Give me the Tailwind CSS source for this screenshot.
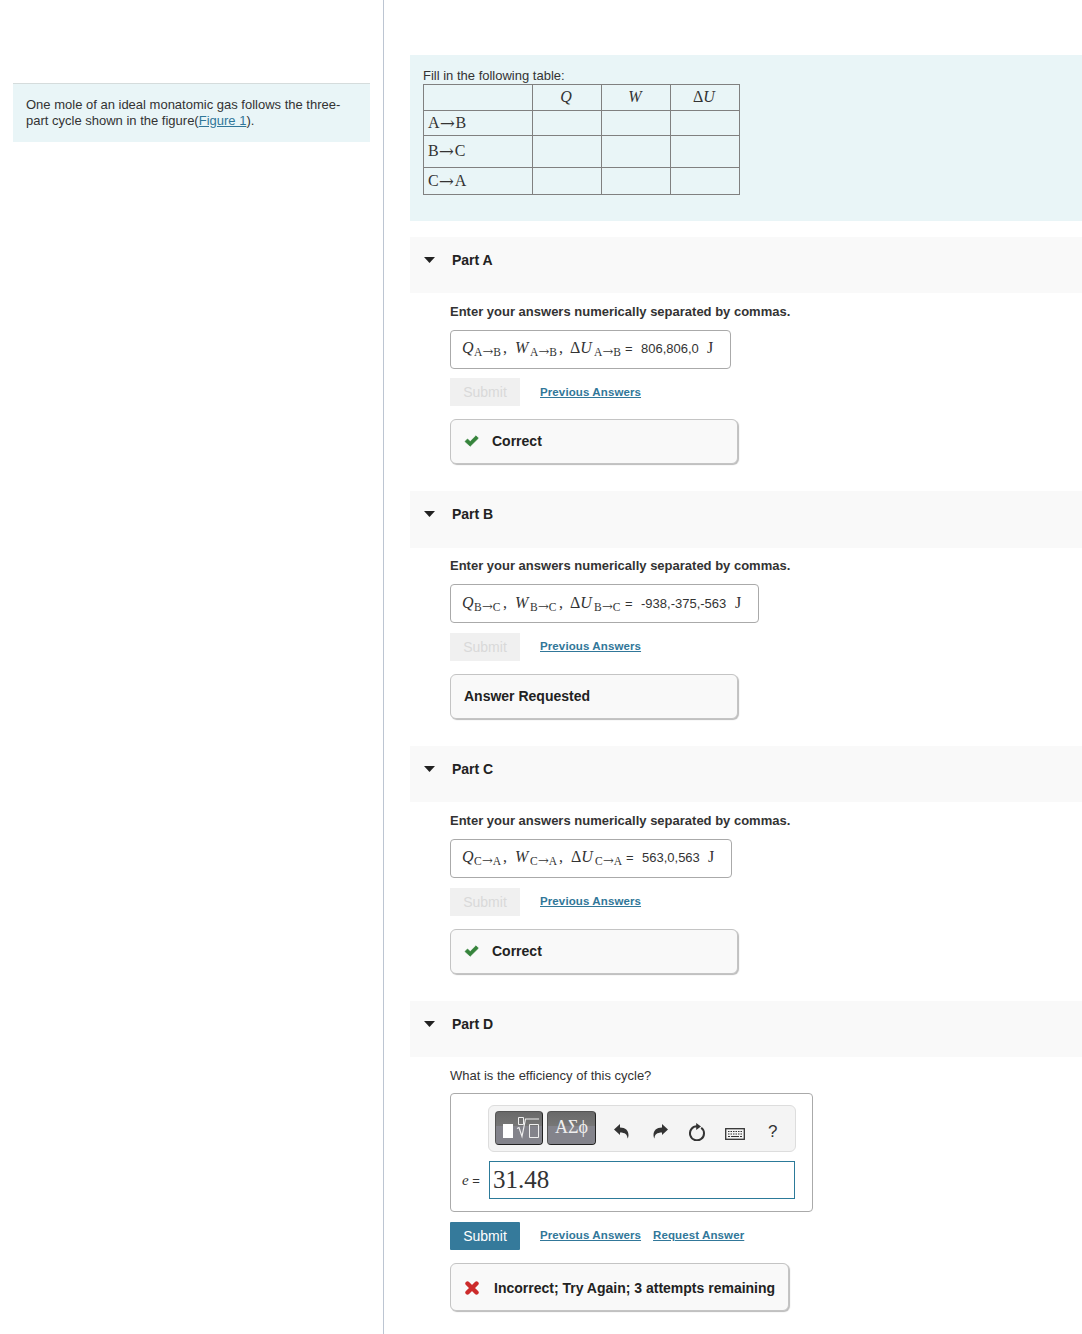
<!DOCTYPE html>
<html lang="en">
<head>
<meta charset="UTF-8" />
<meta name="viewport" content="width=device-width, initial-scale=1.0" />
<title>Ideal Gas Cycle</title>
<script src="https://cdn.jsdelivr.net/npm/@tailwindcss/browser@4"></script>
</head>

<body class="bg-white flex h-[1334px] overflow-hidden font-['Liberation_Sans',Arial,sans-serif] text-[13px] leading-4 text-[#333]">
<aside class="w-[384px] shrink-0 border-r border-[#bcc5d2] pt-[83px] pl-[13px] pr-[13px]">
  <div class="h-[59px] bg-[#e9f5f7] border-t border-[#d5dcdc] pt-[13px] pl-[13px] whitespace-nowrap">
    <p>One mole of an ideal monatomic gas follows the three-</p>
    <p>part cycle shown in the figure(<a href="#" class="text-[#317799] underline">Figure 1</a>).</p>
  </div>
</aside>

<main class="flex-1 pt-[55px] pl-[26px] whitespace-nowrap">
  <!-- Problem table -->
  <div class="h-[166px] bg-[#e9f5f7] pt-[13px] pl-[13px]">
    <p>Fill in the following table:</p>
    <table class="w-[317px] table-fixed border-collapse font-['Liberation_Serif',serif] text-base leading-4 [&_td]:border [&_td]:border-[#808080] [&_td]:p-0 [&_b]:inline-block [&_b]:w-4 [&_b]:h-4 [&_b]:align-top [&_b]:text-center [&_b]:font-normal [&_b]:font-['DejaVu_Math_TeX_Gyre','Liberation_Serif']">
      <tr class="h-[26px] text-center">
        <td class="w-[109px]"></td>
        <td class="w-[69px] italic"><span class="relative -left-px -top-px">Q</span></td>
        <td class="w-[69px] italic"><span class="relative -left-px -top-px">W</span></td>
        <td class="w-[69px]"><span class="relative -left-px -top-px">Δ<i>U</i></span></td>
      </tr>
      <tr class="h-[25px]"><td><span class="pl-1">A<b>→</b>B</span></td><td></td><td></td><td></td></tr>
      <tr class="h-[32px]"><td><span class="pl-1 relative -top-px">B<b>→</b>C</span></td><td></td><td></td><td></td></tr>
      <tr class="h-[27px]"><td><span class="pl-1">C<b>→</b>A</span></td><td></td><td></td><td></td></tr>
    </table>
  </div>

  <!-- Part A -->
  <section class="mt-4 h-[254px]">
    <header class="h-14 bg-[#f9f9f9] flex pt-[15px] pl-[13.500px]">
      <svg class="w-[11px] h-[6px] mt-[5px]" viewBox="0 0 11 6"><path d="M0 0h11L5.5 6z" fill="#222"/></svg>
      <h2 class="ml-[17.500px] text-sm leading-4 font-bold text-[#222]">Part A</h2>
    </header>
    <div class="pl-10 pt-[11px]">
      <p class="font-bold">Enter your answers numerically separated by commas.</p>
      <div class="mt-[10px] w-[281px] h-[39px] border border-[#aaa] rounded pl-[11px] pb-[3px] flex items-center">
        <div class="flex items-baseline font-['Liberation_Serif',serif] text-base [&_sub]:w-[29px] [&_sub]:text-[11.5px] [&_sub]:leading-4 [&_sub]:top-[3px] [&_b]:inline-block [&_b]:w-[11px] [&_b]:h-4 [&_b]:align-top [&_b]:text-center [&_b]:font-normal [&_b]:font-['DejaVu_Math_TeX_Gyre','Liberation_Serif']">
          <i class="w-[12px]">Q</i><sub>A<b>→</b>B</sub><span class="w-[12px]">,</span>
          <i class="w-[15px]">W</i><sub>A<b>→</b>B</sub><span class="w-[11px]">,</span>
          <span class="w-[24px]">Δ<i>U</i></span><sub>A<b>→</b>B</sub>
          <span class="ml-[2px] w-[16px] font-['Liberation_Sans'] text-[13px]">=</span>
          <span class="w-[66px] font-['Liberation_Sans'] text-[13px]">806,806,0</span>
          <span>J</span>
        </div>
      </div>
      <div class="mt-[9px] flex items-center">
        <button class="w-[70px] h-7 bg-[#f0f0f0] text-[#d9d9d9] text-sm">Submit</button>
        <a href="#" class="ml-5 text-[11.5px] font-bold text-[#317799] underline tracking-[0.11px]">Previous Answers</a>
      </div>
      <div class="mt-[13px] w-[288px] h-[45px] bg-[#f9f9f9] border border-[#c4c4c4] rounded-md shadow-[1px_1px_1px_#bbb] pl-[14px] pb-[2px] flex items-center text-sm font-bold text-[#222]">
        <svg class="w-[15px] h-[12px] -ml-px mr-[13px]" viewBox="0 0 15 12"><path d="M1 6.5 3.5 4 6.2 6.6 12 .8 14.3 3.2 6.2 11.2z" fill="#36843c" stroke="#36843c" stroke-width=".7" stroke-linejoin="round"/></svg>
        Correct
      </div>
    </div>
  </section>

  <!-- Part B -->
  <section class="h-[255px]">
    <header class="h-[57px] bg-[#f9f9f9] flex pt-[15px] pl-[13.500px]">
      <svg class="w-[11px] h-[6px] mt-[5px]" viewBox="0 0 11 6"><path d="M0 0h11L5.5 6z" fill="#222"/></svg>
      <h2 class="ml-[17.500px] text-sm leading-4 font-bold text-[#222]">Part B</h2>
    </header>
    <div class="pl-10 pt-[10px]">
      <p class="font-bold">Enter your answers numerically separated by commas.</p>
      <div class="mt-[10px] w-[309px] h-[39px] border border-[#aaa] rounded pl-[11px] pb-[2px] flex items-center">
        <div class="flex items-baseline font-['Liberation_Serif',serif] text-base [&_sub]:w-[29px] [&_sub]:text-[11.5px] [&_sub]:leading-4 [&_sub]:top-[3px] [&_b]:inline-block [&_b]:w-[11px] [&_b]:h-4 [&_b]:align-top [&_b]:text-center [&_b]:font-normal [&_b]:font-['DejaVu_Math_TeX_Gyre','Liberation_Serif']">
          <i class="w-[12px]">Q</i><sub>B<b>→</b>C</sub><span class="w-[12px]">,</span>
          <i class="w-[15px]">W</i><sub>B<b>→</b>C</sub><span class="w-[11px]">,</span>
          <span class="w-[24px]">Δ<i>U</i></span><sub>B<b>→</b>C</sub>
          <span class="ml-[2px] w-[16px] font-['Liberation_Sans'] text-[13px]">=</span>
          <span class="w-[94px] font-['Liberation_Sans'] text-[13px]">-938,-375,-563</span>
          <span>J</span>
        </div>
      </div>
      <div class="mt-[10px] flex items-center">
        <button class="w-[70px] h-7 bg-[#f0f0f0] text-[#d9d9d9] text-sm">Submit</button>
        <a href="#" class="ml-5 mb-[2px] text-[11.5px] font-bold text-[#317799] underline tracking-[0.11px]">Previous Answers</a>
      </div>
      <div class="mt-[13px] w-[288px] h-[45px] bg-[#f9f9f9] border border-[#c4c4c4] rounded-md shadow-[1px_1px_1px_#bbb] pl-[13px] pb-[2px] flex items-center text-sm font-bold text-[#222]">Answer Requested</div>
    </div>
  </section>

  <!-- Part C -->
  <section class="h-[255px]">
    <header class="h-14 bg-[#f9f9f9] flex pt-[15px] pl-[13.500px]">
      <svg class="w-[11px] h-[6px] mt-[5px]" viewBox="0 0 11 6"><path d="M0 0h11L5.5 6z" fill="#222"/></svg>
      <h2 class="ml-[17.500px] text-sm leading-4 font-bold text-[#222]">Part C</h2>
    </header>
    <div class="pl-10 pt-[11px]">
      <p class="font-bold">Enter your answers numerically separated by commas.</p>
      <div class="mt-[10px] w-[282px] h-[39px] border border-[#aaa] rounded pl-[11px] pb-[3px] flex items-center">
        <div class="flex items-baseline font-['Liberation_Serif',serif] text-base [&_sub]:w-[29px] [&_sub]:text-[11.5px] [&_sub]:leading-4 [&_sub]:top-[3px] [&_b]:inline-block [&_b]:w-[11px] [&_b]:h-4 [&_b]:align-top [&_b]:text-center [&_b]:font-normal [&_b]:font-['DejaVu_Math_TeX_Gyre','Liberation_Serif']">
          <i class="w-[12px]">Q</i><sub>C<b>→</b>A</sub><span class="w-[12px]">,</span>
          <i class="w-[15px]">W</i><sub>C<b>→</b>A</sub><span class="w-[12px]">,</span>
          <span class="w-[24px]">Δ<i>U</i></span><sub>C<b>→</b>A</sub>
          <span class="ml-[2px] w-[16px] font-['Liberation_Sans'] text-[13px]">=</span>
          <span class="w-[66px] font-['Liberation_Sans'] text-[13px]">563,0,563</span>
          <span>J</span>
        </div>
      </div>
      <div class="mt-[10px] flex items-center">
        <button class="w-[70px] h-7 bg-[#f0f0f0] text-[#d9d9d9] text-sm">Submit</button>
        <a href="#" class="ml-5 mb-[2px] text-[11.5px] font-bold text-[#317799] underline tracking-[0.11px]">Previous Answers</a>
      </div>
      <div class="mt-[13px] w-[288px] h-[45px] bg-[#f9f9f9] border border-[#c4c4c4] rounded-md shadow-[1px_1px_1px_#bbb] pl-[14px] pb-[2px] flex items-center text-sm font-bold text-[#222]">
        <svg class="w-[15px] h-[12px] -ml-px mr-[13px]" viewBox="0 0 15 12"><path d="M1 6.5 3.5 4 6.2 6.6 12 .8 14.3 3.2 6.2 11.2z" fill="#36843c" stroke="#36843c" stroke-width=".7" stroke-linejoin="round"/></svg>
        Correct
      </div>
    </div>
  </section>

  <!-- Part D -->
  <section>
    <header class="h-14 bg-[#f9f9f9] flex pt-[15px] pl-[13.500px]">
      <svg class="w-[11px] h-[6px] mt-[5px]" viewBox="0 0 11 6"><path d="M0 0h11L5.5 6z" fill="#222"/></svg>
      <h2 class="ml-[17.500px] text-sm leading-4 font-bold text-[#222]">Part D</h2>
    </header>
    <div class="pl-10 pt-[11px]">
      <p>What is the efficiency of this cycle?</p>
      <div class="mt-[9px] w-[363px] h-[119px] border border-[#aaa] rounded pt-[11px]">
        <!-- Equation toolbar -->
        <div class="ml-[37px] w-[308px] h-[47px] bg-[#f4f4f4] border border-[#ddd] rounded-md pl-[6px] pt-[5px] flex">
          <button class="w-[48px] h-[34px] rounded overflow-hidden border border-[#555] border-r-[#222] border-b-[#222] bg-linear-to-b from-[#696969] to-[#777] to-45%">
            <svg class="w-[46px] h-[32px]" viewBox="0 0 46 32" fill="none" stroke="#eee"><rect x="0" y="14" width="46" height="18" fill="#83838b" stroke="none"/><path d="M7 12h10v14H7z" fill="#fff" stroke="none"/><path d="M22.5 5.500h5v7h-5zM33.500 12.500h9v13h-9z"/><path d="M21 16.500l2-1 3 9 3.500-17.500H43" stroke-width="1.200"/></svg>
          </button>
          <button class="ml-[4px] w-[49px] h-[34px] rounded overflow-hidden border border-[#555] border-r-[#222] border-b-[#222] bg-linear-to-b from-[#696969] to-[#777] to-45%">
            <span class="flex h-full items-center justify-center pb-[2px] font-['Liberation_Serif',serif] text-[18px] text-[#eee] bg-linear-to-b from-transparent from-45% to-[#83838b] to-45%">ΑΣϕ</span>
          </button>
          <svg class="ml-[18px] mt-[13px] w-[15px] h-[15px]" viewBox="0 0 15 15"><path d="M0 5.500 6 0v3.500c5.500 0 8.500 3 8.500 7.500 0 1.500-.5 3-1 3.500 0-4-2.500-6-7.500-6V11z" fill="#333"/></svg>
          <svg class="ml-[24px] mt-[13px] w-[15px] h-[15px]" viewBox="0 0 15 15"><path d="M15 5.500 9 0v3.500C3.500 3.500.5 6.500.5 11c0 1.500.5 3 1 3.500 0-4 2.500-6 7.500-6V11z" fill="#333"/></svg>
          <svg class="ml-[21px] mt-[12px] w-[17px] h-[18px]" viewBox="0 0 17 18"><path d="M12.200 4.700A7 7 0 1 1 8 3.300" fill="none" stroke="#333" stroke-width="2"/><path d="M7.200 0 12 3.500 7.200 7z" fill="#333"/></svg>
          <svg class="ml-[19px] mt-[17px] w-[20px] h-[12px]" viewBox="0 0 20 12" fill="none" stroke="#333"><rect x=".7" y=".7" width="18.600" height="10.600" stroke-width="1.300"/><path d="M3 3.500h14" stroke-dasharray="1.500 1"/><path d="M3 6h14" stroke-dasharray="1.500 1"/><path d="M3 8.500h2M6 8.500h8M15 8.500h2"/></svg>
          <span class="ml-[23px] mt-[12px] text-[17px] leading-[18px]">?</span>
        </div>
        <div class="mt-[9px] flex items-center">
          <span class="w-[38px] pl-[11px] text-[13px]"><i class="font-['Liberation_Serif',serif] text-[15px]">e</i> =</span>
          <div class="w-[306px] h-[38px] border border-[#2c7a99] bg-white pl-[3px] flex items-center font-['Liberation_Serif',serif] text-[25px]">31.48</div>
        </div>
      </div>
      <div class="mt-[10px] flex items-center">
        <button class="w-[70px] h-7 bg-[#357a9b] text-white text-sm rounded-[1px]">Submit</button>
        <a href="#" class="ml-5 mb-[2px] text-[11.5px] font-bold text-[#317799] underline tracking-[0.11px]">Previous Answers</a>
        <a href="#" class="ml-[12px] mb-[2px] text-[11.5px] font-bold text-[#317799] underline tracking-[0.11px]">Request Answer</a>
      </div>
      <div class="mt-[13px] w-[339px] h-[48px] bg-[#f9f9f9] border border-[#c4c4c4] rounded-md shadow-[1px_1px_1px_#bbb] pl-[14px] pt-px flex items-center text-sm font-bold text-[#222]">
        <svg class="w-[14px] h-[14px] mr-[15px]" viewBox="0 0 14 14"><path d="M2.500 2.500l9 9M11.500 2.500l-9 9" stroke="#cc2b2b" stroke-width="4.400" stroke-linecap="round"/></svg>
        Incorrect; Try Again; 3 attempts remaining
      </div>
    </div>
  </section>
</main>
</body>
</html>
